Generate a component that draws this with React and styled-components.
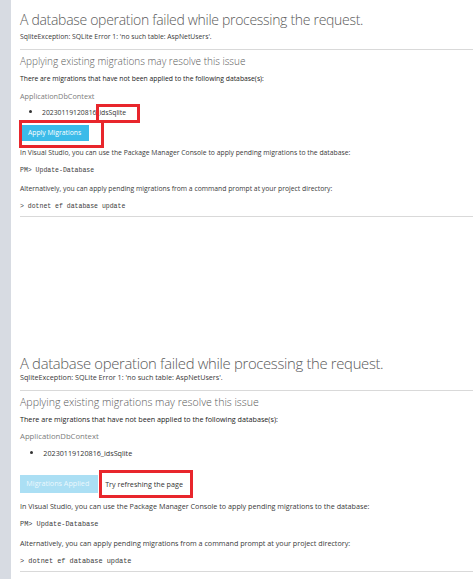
import React from "react";
import styled, { createGlobalStyle } from "styled-components";

const Global = createGlobalStyle`
  html, body { margin: 0; padding: 0; background: #fff; }
  body { font-family: "Open Sans", "Liberation Sans", sans-serif; }
`;

const Page = styled.div`
  display: flex;
  min-height: 579px;
  background: #fff;
`;

const SideBar = styled.div`
  flex: 0 0 11px;
  background: #d7dbe2;
`;

const Content = styled.main`
  flex: 1;
  padding-left: 9px;
  padding-right: 1px;
`;

const Section = styled.section`
  --u: ${(p) => p.$scale}px;
  display: flex;
  flex-direction: column;
  align-items: flex-start;
  margin-top: ${(p) => p.$top}px;
`;

const Title = styled.h1`
  margin: 0;
  font: 300 calc(var(--u) * 14) / calc(var(--u) * ${(p) => p.$lh}) "Open Sans", sans-serif;
  letter-spacing: calc(var(--u) * -0.3);
  color: #5a5a5a;
  white-space: nowrap;
`;

const Small = styled.p`
  margin: calc(var(--u) * ${(p) => p.$mt}) 0 0;
  font: ${(p) => (p.$strong ? 500 : 400)} calc(var(--u) * 6.8) / calc(var(--u) * 10) "Open Sans", sans-serif;
  color: ${(p) => (p.$strong ? "#222" : "#3a3a3a")};
  white-space: nowrap;
`;

const Rule = styled.hr`
  align-self: stretch;
  margin: calc(var(--u) * ${(p) => p.$mt}) 0 0;
  border: 0;
  border-top: 1px solid #d9d9d9;
  height: 0;
`;

const SubTitle = styled.h2`
  margin: calc(var(--u) * ${(p) => p.$mt}) 0 0;
  font: 300 calc(var(--u) * 10) / calc(var(--u) * 14) "Open Sans", sans-serif;
  color: #5a5a5a;
  white-space: nowrap;
`;

const Context = styled.h3`
  margin: calc(var(--u) * ${(p) => p.$mt}) 0 0;
  font: 400 calc(var(--u) * 7.3) / calc(var(--u) * 12) "Open Sans", sans-serif;
  color: #7c7c7c;
  white-space: nowrap;
`;

const List = styled.ul`
  margin: calc(var(--u) * ${(p) => p.$mt}) 0 0;
  padding-left: calc(var(--u) * 22);
  font: 400 calc(var(--u) * 6.8) / calc(var(--u) * 10) "Open Sans", sans-serif;
  color: #333;
  li::marker { font-size: calc(var(--u) * 8); }
`;

const Mark = styled.span`
  position: relative;
  display: inline-flex;
  &::after {
    content: "";
    position: absolute;
    left: ${(p) => p.$l}px;
    right: ${(p) => p.$r}px;
    top: ${(p) => p.$t}px;
    bottom: ${(p) => p.$b}px;
    border: 3px solid #e8262c;
    pointer-events: none;
  }
`;

const ActionRow = styled.div`
  display: flex;
  align-items: center;
  margin-top: calc(var(--u) * ${(p) => p.$mt});
`;

const Button = styled.button`
  display: block;
  margin: 0 0 0 ${(p) => p.$ml}px;
  height: calc(var(--u) * ${(p) => p.$h});
  padding: 0 calc(var(--u) * 8) 0 calc(var(--u) * 6);
  border: 0;
  background: ${(p) => (p.disabled ? "#abdff4" : "#3bbbe9")};
  color: ${(p) => (p.disabled ? "#eaf7fd" : "#fff")};
  font: 400 calc(var(--u) * 6.8) / 1 "Open Sans", sans-serif;
  white-space: nowrap;
`;

const Hint = styled.span`
  margin-left: calc(var(--u) * 7);
  font: 400 calc(var(--u) * 6.8) / calc(var(--u) * 10) "Open Sans", sans-serif;
  color: #333;
  white-space: nowrap;
`;

const Code = styled.pre`
  margin: calc(var(--u) * ${(p) => p.$mt}) 0 0;
  font: 400 calc(var(--u) * 6.5) / calc(var(--u) * 10) "Liberation Mono", "DejaVu Sans Mono", monospace;
  color: #3c3c3c;
`;

const firstGaps = { titleLh: 20, exc: 2, hr1: 7, sub: 4, there: 6, ctx: 6, list: 5, action: 7, btnH: 16, vs: 7, pm: 8, alt: 8, cli: 8, hr2: 4 };
const secondGaps = { titleLh: 17, exc: 0, hr1: 7, sub: 3.4, there: 4, ctx: 5, list: 5, action: 15.8, btnH: 17, vs: 7.3, pm: 7, alt: 8.6, cli: 6.3, hr2: 4.4 };

function ErrorSection({ scale, top, applied, g }) {
  return (
    <Section $scale={scale} $top={top}>
      <Title $lh={g.titleLh}>A database operation failed while processing the request.</Title>
      <Small $mt={g.exc}>SqliteException: SQLite Error 1: 'no such table: AspNetUsers'.</Small>
      <Rule $mt={g.hr1} />
      <SubTitle $mt={g.sub}>Applying existing migrations may resolve this issue</SubTitle>
      <Small $strong $mt={g.there}>There are migrations that have not been applied to the following database(s):</Small>
      <Context $mt={g.ctx}>ApplicationDbContext</Context>
      <List $mt={g.list}>
        <li>
          20230119120816_
          {applied ? (
            "idsSqlite"
          ) : (
            <Mark $l={-3} $r={-14} $t={-4} $b={-5}>idsSqlite</Mark>
          )}
        </li>
      </List>
      {applied ? (
        <ActionRow $mt={g.action}>
          <Button disabled $ml={0} $h={g.btnH}>Migrations Applied</Button>
          <Mark $l={1} $r={-10} $t={-9} $b={-9}>
            <Hint>Try refreshing the page</Hint>
          </Mark>
        </ActionRow>
      ) : (
        <ActionRow $mt={g.action}>
          <Mark $l={-1} $r={-15} $t={-5} $b={-7}>
            <Button $ml={2} $h={g.btnH}>Apply Migrations</Button>
          </Mark>
        </ActionRow>
      )}
      <Small $mt={g.vs}>In Visual Studio, you can use the Package Manager Console to apply pending migrations to the database:</Small>
      <Code $mt={g.pm}>PM&gt; Update-Database</Code>
      <Small $mt={g.alt}>Alternatively, you can apply pending migrations from a command prompt at your project directory:</Small>
      <Code $mt={g.cli}>&gt; dotnet ef database update</Code>
      <Rule $mt={g.hr2} />
    </Section>
  );
}

export default function App() {
  return (
    <>
      <Global />
      <Page>
        <SideBar />
        <Content>
          <ErrorSection scale={1} top={10} g={firstGaps} />
          <ErrorSection scale={1.06} top={137} g={secondGaps} applied />
        </Content>
      </Page>
    </>
  );
}
